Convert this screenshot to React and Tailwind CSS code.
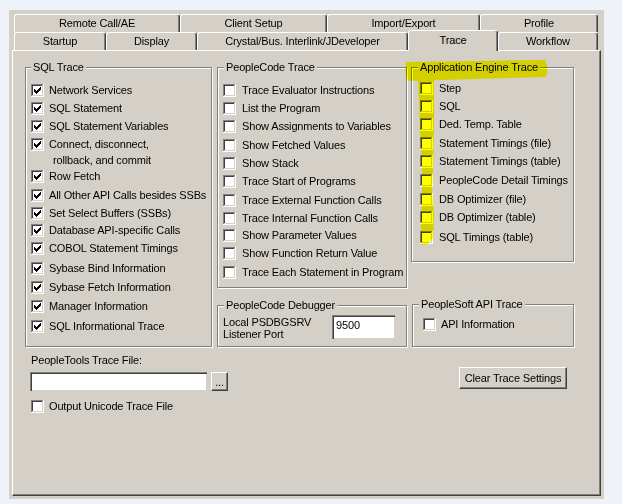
import React from "react";

function Box({ checked }) {
  return (
    <svg width="13" height="13" viewBox="0 0 13 13" shapeRendering="crispEdges" className="block shrink-0">
      <rect x="0" y="0" width="13" height="13" fill="#ffffff" />
      <rect x="0" y="0" width="12" height="1" fill="#808080" />
      <rect x="0" y="0" width="1" height="12" fill="#808080" />
      <rect x="1" y="1" width="10" height="1" fill="#404040" />
      <rect x="1" y="1" width="1" height="10" fill="#404040" />
      <rect x="1" y="11" width="11" height="1" fill="#d4d0c8" />
      <rect x="11" y="1" width="1" height="11" fill="#d4d0c8" />
      <rect x="0" y="12" width="13" height="1" fill="#ffffff" />
      <rect x="12" y="0" width="1" height="13" fill="#ffffff" />
      {checked && (
        <path
          fill="#000"
          d="M9 3h1v1h-1z M8 4h2v1h-2z M3 5h1v1h-1z M7 5h3v1h-3z M3 6h2v1h-2z M6 6h3v1h-3z M3 7h5v1h-5z M4 8h3v1h-3z M5 9h1v1h-1z"
        />
      )}
    </svg>
  );
}

function Row({ h, checked, label, gap }) {
  return (
    <div className={`flex items-start ${h} ${gap}`}>
      <div className="h-[18px] flex items-center">
        <Box checked={checked} />
      </div>
      {typeof label === "string" ? (
        <div className="leading-[18px] whitespace-nowrap">{label}</div>
      ) : (
        label
      )}
    </div>
  );
}

function Group({ title, titleLeft, className, children }) {
  return (
    <div
      className={`relative border border-[#808080] shadow-[inset_1px_1px_0_#ffffff,1px_1px_0_#ffffff] ${className}`}
    >
      <span className={`absolute top-[-7px] ${titleLeft} bg-[#d4d0c8] px-[2px] leading-[13px] whitespace-nowrap`}>
        {title}
      </span>
      {children}
    </div>
  );
}

function Tab({ w, children }) {
  return (
    <div
      className={`${w} h-full flex items-center justify-center border-l border-t border-white border-r border-r-[#404040] rounded-t-[3px] shadow-[inset_-1px_0_0_#808080] whitespace-nowrap`}
    >
      {children}
    </div>
  );
}

const sqlRows = [
  ["Network Services", "h-[18px]"],
  ["SQL Statement", "h-[18px]"],
  ["SQL Statement Variables", "h-[18px]"],
  [
    <div className="pt-[1px] leading-[16px] whitespace-nowrap" key="c">
      <div>Connect, disconnect,</div>
      <div className="pl-[4px]">rollback, and commit</div>
    </div>,
    "h-[32px]",
  ],
  ["Row Fetch", "h-[19px]"],
  ["All Other API Calls besides SSBs", "h-[18px]"],
  ["Set Select Buffers (SSBs)", "h-[17px]"],
  ["Database API-specific Calls", "h-[18px]"],
  ["COBOL Statement Timings", "h-[20px]"],
  ["Sybase Bind Information", "h-[19px]"],
  ["Sybase Fetch Information", "h-[19px]"],
  ["Manager Information", "h-[20px]"],
  ["SQL Informational Trace", "h-[18px]"],
];

const pcRows = [
  ["Trace Evaluator Instructions", "h-[18px]"],
  ["List the Program", "h-[18px]"],
  ["Show Assignments to Variables", "h-[19px]"],
  ["Show Fetched Values", "h-[18px]"],
  ["Show Stack", "h-[18px]"],
  ["Trace Start of Programs", "h-[19px]"],
  ["Trace External Function Calls", "h-[18px]"],
  ["Trace Internal Function Calls", "h-[17px]"],
  ["Show Parameter Values", "h-[18px]"],
  ["Show Function Return Value", "h-[19px]"],
  ["Trace Each Statement in Program", "h-[18px]"],
];

const aeRows = [
  ["Step", "h-[18px]"],
  ["SQL", "h-[18px]"],
  ["Ded. Temp. Table", "h-[19px]"],
  ["Statement Timings (file)", "h-[18px]"],
  ["Statement Timings (table)", "h-[19px]"],
  ["PeopleCode Detail Timings", "h-[19px]"],
  ["DB Optimizer (file)", "h-[18px]"],
  ["DB Optimizer (table)", "h-[20px]"],
  ["SQL Timings (table)", "h-[18px]"],
];

export default function App() {
  return (
    <div className="relative w-[622px] h-[504px] overflow-hidden bg-[#eef2f9] pt-[10px] pl-[9px] font-['Liberation_Sans',Arial,sans-serif] text-[11px] leading-[13px] tracking-[-0.15px] text-black">
      <div className="w-[595px] h-[489px] bg-[#d4d0c8] pt-[4px]">
        {/* Tab row 1 */}
        <div className="flex ml-[5px] h-[18px]">
          <Tab w="w-[166px]">Remote Call/AE</Tab>
          <Tab w="w-[147px]">Client Setup</Tab>
          <Tab w="w-[153px]">Import/Export</Tab>
          <Tab w="w-[118px]">Profile</Tab>
        </div>
        {/* Tab row 2 */}
        <div className="flex items-end ml-[5px] h-[18px]">
          <Tab w="w-[92px]">Startup</Tab>
          <Tab w="w-[91px]">Display</Tab>
          <Tab w="w-[211px]">Crystal/Bus. Interlink/JDeveloper</Tab>
          <div className="relative z-10 w-[90px] h-[21px] -mb-[1px] flex items-start justify-center pt-[3px] bg-[#d4d0c8] border-l border-t border-white border-r border-r-[#404040] rounded-t-[3px] shadow-[inset_-1px_0_0_#808080]">
            Trace
          </div>
          <Tab w="w-[100px]">Workflow</Tab>
        </div>
        {/* Panel */}
        <div className="ml-[3px] w-[589px] h-[446px] border-l border-t border-white border-r border-b border-r-[#404040] border-b-[#404040] shadow-[inset_-1px_-1px_0_#808080] pt-[16px] pl-[12px]">
          <div className="flex items-start">
            <Group title="SQL Trace" titleLeft="left-[5px]" className="w-[187px] h-[280px] pt-[13px] pl-[5px]">
              {sqlRows.map(([l, h], i) => (
                <Row key={i} h={h} label={l} checked gap="gap-[5px]" />
              ))}
            </Group>
            <div className="ml-[5px] flex flex-col">
              <Group title="PeopleCode Trace" titleLeft="left-[6px]" className="w-[190px] h-[221px] pt-[13px] pl-[5px]">
                {pcRows.map(([l, h], i) => (
                  <Row key={i} h={h} label={l} gap="gap-[6px]" />
                ))}
              </Group>
              <Group title="PeopleCode Debugger" titleLeft="left-[6px]" className="mt-[17px] w-[190px] h-[42px] pt-[9px] pl-[5px]">
                <div className="flex items-start">
                  <div className="w-[109px] mt-[1px] leading-[12px] whitespace-nowrap">
                    <div>Local PSDBGSRV</div>
                    <div>Listener Port</div>
                  </div>
                  <div className="w-[63px] h-[24px] bg-white border-t border-l border-[#808080] border-b-white border-r-white shadow-[inset_1px_1px_0_#404040,inset_-1px_-1px_0_#d4d0c8] pl-[3px] pt-[3px] leading-[13px]">
                    9500
                  </div>
                </div>
              </Group>
            </div>
            <div className="ml-[4px] flex flex-col">
              <Group title="Application Engine Trace" titleLeft="left-[6px]" className="w-[163px] h-[195px] pt-[11px] pl-[8px]">
                {aeRows.map(([l, h], i) => (
                  <Row key={i} h={h} label={l} gap="gap-[6px]" />
                ))}
              </Group>
              <Group title="PeopleSoft API Trace" titleLeft="left-[6px]" className="ml-[1px] mt-[42px] w-[162px] h-[43px] pt-[10px] pl-[10px]">
                <Row h="h-[18px]" label="API Information" gap="gap-[5px]" />
              </Group>
            </div>
          </div>
          {/* bottom */}
          <div className="flex items-start">
            <div className="ml-[5px] flex flex-col w-[198px]">
              <div className="mt-[7px] ml-[1px] leading-[13px] whitespace-nowrap">PeopleTools Trace File:</div>
              <div className="mt-[5px] flex items-start">
                <div className="w-[177px] h-[19px] bg-white border-t border-l border-[#808080] border-b-white border-r-white shadow-[inset_1px_1px_0_#404040,inset_-1px_-1px_0_#d4d0c8]" />
                <div className="ml-[4px] w-[17px] h-[19px] flex items-end justify-center pb-[3px] leading-[10px] border-t border-l border-white border-b border-r border-b-[#404040] border-r-[#404040] shadow-[inset_-1px_-1px_0_#808080]">
                  ...
                </div>
              </div>
              <div className="mt-[9px] ml-[1px] flex items-center gap-[5px]">
                <Box />
                <span className="whitespace-nowrap">Output Unicode Trace File</span>
              </div>
            </div>
            <div className="ml-[231px] mt-[20px] w-[108px] h-[22px] flex items-center justify-center border-t border-l border-white border-b border-r border-b-[#404040] border-r-[#404040] shadow-[inset_-1px_-1px_0_#808080] whitespace-nowrap">
              Clear Trace Settings
            </div>
          </div>
        </div>
      </div>
      {/* yellow highlighter mark */}
      <svg
        className="absolute left-0 top-0 pointer-events-none mix-blend-multiply"
        width="622"
        height="504"
        viewBox="0 0 622 504"
      >
        <path
          fill="#ffff00"
          d="M406,62 L545,60 Q549,68 546,77 L408,81 Q404,72 406,62 Z"
        />
        <path
          fill="#ffff00"
          d="M418,79 L434,79 L434,120 L433,170 L432,190 L434,215 L433,238 L428,244 L421,245 L421,215 L422,190 L422,165 L420,130 L419,100 Z"
        />
      </svg>
    </div>
  );
}
